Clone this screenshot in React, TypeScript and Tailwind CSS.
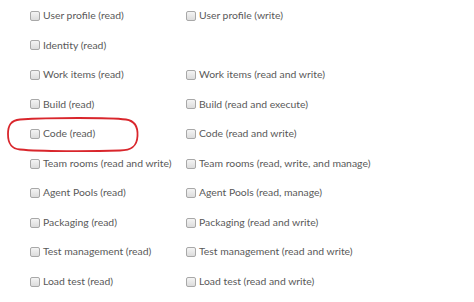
const rows: [string, string | null][] = [
  ['User profile (read)', 'User profile (write)'],
  ['Identity (read)', null],
  ['Work items (read)', 'Work items (read and write)'],
  ['Build (read)', 'Build (read and execute)'],
  ['Code (read)', 'Code (read and write)'],
  ['Team rooms (read and write)', 'Team rooms (read, write, and manage)'],
  ['Agent Pools (read)', 'Agent Pools (read, manage)'],
  ['Packaging (read)', 'Packaging (read and write)'],
  ['Test management (read)', 'Test management (read and write)'],
  ['Load test (read)', 'Load test (read and write)'],
];

function Check({ label }: { label: string }) {
  return (
    <label className="flex items-center gap-[3px] whitespace-nowrap">
      <span className="w-[10px] h-[10px] rounded-[2px] border border-[#a8a8a8] bg-gradient-to-b from-[#f4f4f4] to-[#dcdcdc] shrink-0" />
      <span>{label}</span>
    </label>
  );
}

export default function App() {
  return (
    <div
      className="relative w-[474px] h-[302px] bg-white overflow-hidden text-[#595959] text-[10.4px] pt-[1px] pl-[30px]"
      style={{ fontFamily: 'Lato, "Noto Sans", sans-serif' }}
    >
      <div className="grid grid-cols-[156px_auto]">
        {rows.map(([a, b], i) => (
          <div key={i} className="contents">
            <div className="h-[29.55px] flex items-center">
              <Check label={a} />
            </div>
            <div className="h-[29.55px] flex items-center">
              {b && <Check label={b} />}
            </div>
          </div>
        ))}
      </div>
      <svg className="absolute left-0 top-0 pointer-events-none" width="474" height="302">
        <path
          d="M20 119.5 C 50 117.5, 110 117.5, 126 119.5 C 136 121, 138 128, 137.5 136 C 137 146, 132 150.5, 120 150.5 C 90 151.5, 40 151.5, 20 149.5 C 10 148.5, 8 142, 8 134 C 8 125, 11 120.5, 20 119.5 Z"
          fill="none"
          stroke="#d9262c"
          strokeWidth="1.8"
        />
      </svg>
    </div>
  );
}
